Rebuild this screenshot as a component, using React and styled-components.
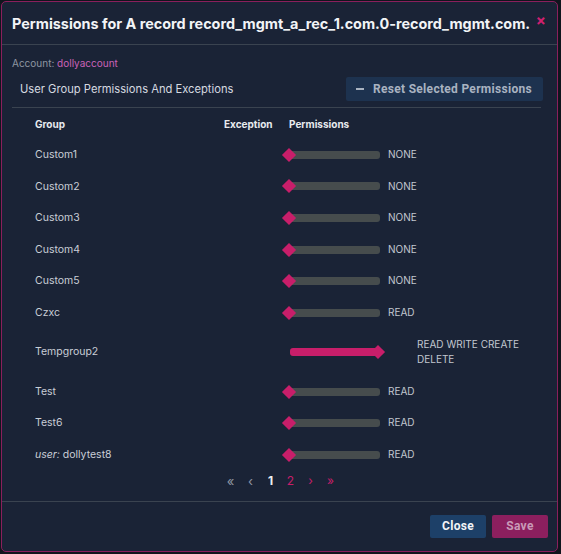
import React from "react";
import styled, { createGlobalStyle } from "styled-components";

const GlobalStyle = createGlobalStyle`
  html, body {
    margin: 0;
    background: #10151d;
    font-family: Inter, "Noto Sans", sans-serif;
  }
  * {
    box-sizing: border-box;
  }
`;

const rows = [
  { name: "Custom1", level: "NONE" },
  { name: "Custom2", level: "NONE" },
  { name: "Custom3", level: "NONE" },
  { name: "Custom4", level: "NONE" },
  { name: "Custom5", level: "NONE" },
  { name: "Czxc", level: "READ" },
  { name: "Tempgroup2", level: "READ WRITE CREATE DELETE", full: true },
  { name: "Test", level: "READ" },
  { name: "Test6", level: "READ" },
  { name: "dollytest8", level: "READ", user: true },
];

const App = () => {
  return (
    <>
      <GlobalStyle />
      <Backdrop>
        <Modal>
          <Header>
            <Title>
              Permissions for A record record_mgmt_a_rec_1.com.0-record_mgmt.com.
            </Title>
            <CloseX>×</CloseX>
          </Header>
          <Body>
            <Account>
              Account: <span>dollyaccount</span>
            </Account>
            <SectionBar>
              <SectionTitle>User Group Permissions And Exceptions</SectionTitle>
              <ResetButton>
                <Minus />
                Reset Selected Permissions
              </ResetButton>
            </SectionBar>
            <Table>
              <HeadRow>
                <HeadCell>Group</HeadCell>
                <HeadCell>Exception</HeadCell>
                <HeadCell>Permissions</HeadCell>
              </HeadRow>
              {rows.map((row) => (
                <Row key={row.name}>
                  <GroupName>
                    {row.user && <em>user:</em>} {row.name}
                  </GroupName>
                  <div />
                  <PermCell>
                    <Track full={row.full}>
                      <Thumb full={row.full} />
                    </Track>
                    <Level full={row.full}>{row.level}</Level>
                  </PermCell>
                </Row>
              ))}
            </Table>
            <Pager>
              <PageLink>«</PageLink>
              <PageLink>‹</PageLink>
              <PageLink current>1</PageLink>
              <PageLink active>2</PageLink>
              <PageLink active>›</PageLink>
              <PageLink active>»</PageLink>
            </Pager>
          </Body>
          <Footer>
            <Button>Close</Button>
            <Button save>Save</Button>
          </Footer>
        </Modal>
      </Backdrop>
    </>
  );
};

const Backdrop = styled.div`
  padding: 1px 3px 2px 1px;
`;

const Modal = styled.div`
  width: 557px;
  background: #1a2336;
  border: 1px solid #8a1f5c;
  border-radius: 5px;
  color: #c9ced6;
`;

const Header = styled.div`
  display: flex;
  align-items: center;
  justify-content: space-between;
  height: 43px;
  padding: 0 11px 0 10px;
  border-bottom: 1px solid #3a4350;
`;

const Title = styled.h2`
  margin: 0;
  font-size: 14.4px;
  font-weight: 700;
  color: #f2f4f7;
  white-space: nowrap;
`;

const CloseX = styled.span`
  align-self: flex-start;
  margin-top: 11px;
  color: #d0206f;
  font-size: 15px;
  font-weight: 700;
  line-height: 1;
`;

const Body = styled.div`
  padding: 11px 14px 0 10px;
`;

const Account = styled.div`
  font-size: 10px;
  line-height: 14px;
  color: #8e96a2;
  span {
    color: #c862b8;
  }
`;

const SectionBar = styled.div`
  display: flex;
  align-items: center;
  justify-content: space-between;
  margin-top: 7px;
  padding: 0 0 6px 8px;
  border-bottom: 1px solid #3a4350;
  margin-right: 2px;
`;

const SectionTitle = styled.div`
  font-size: 11.2px;
  color: #d6dae0;
`;

const ResetButton = styled.button`
  display: flex;
  align-items: center;
  gap: 9px;
  height: 24px;
  width: 197px;
  margin-right: -2px;
  padding: 0 0 0 10px;
  border: none;
  border-radius: 2px;
  background: #1d324f;
  color: #a9b3c1;
  font-family: Roboto, "Liberation Sans", sans-serif;
  font-size: 12px;
  font-weight: 700;
  letter-spacing: 0.3px;
`;

const Minus = styled.span`
  width: 8px;
  height: 2px;
  background: #a9b3c1;
`;

const Table = styled.div`
  display: flex;
  flex-direction: column;
`;

const HeadRow = styled.div`
  display: grid;
  grid-template-columns: 189px 65px 1fr;
  height: 31px;
  align-items: center;
  padding: 1px 0 0 23px;
`;

const HeadCell = styled.div`
  font-size: 10px;
  font-weight: 700;
  color: #e8ebef;
`;

const Row = styled.div`
  display: grid;
  grid-template-columns: 189px 65px 1fr;
  align-items: center;
  padding: 8px 0 8px 23px;
  min-height: 31.6px;
`;

const GroupName = styled.div`
  font-size: 10.5px;
  line-height: 15.6px;
  color: #c9ced6;
  em {
    font-style: italic;
  }
`;

const PermCell = styled.div`
  display: flex;
  align-items: center;
`;

const Track = styled.div`
  position: relative;
  width: 91px;
  height: 8px;
  margin-left: ${(p) => (p.full ? "1px" : "0")};
  border-radius: ${(p) => (p.full ? "3px 0 0 3px" : "3px")};
  background: ${(p) => (p.full ? "#c81e6a" : "#464c4d")};
`;

const Thumb = styled.span`
  position: absolute;
  top: -1px;
  left: ${(p) => (p.full ? "83px" : "-5px")};
  width: 10px;
  height: 10px;
  background: #c81e6a;
  transform: rotate(45deg);
`;

const Level = styled.div`
  margin-left: ${(p) => (p.full ? "36px" : "8px")};
  max-width: 112px;
  font-size: 10px;
  line-height: 15.6px;
  color: #c3c8d0;
`;

const Pager = styled.div`
  display: flex;
  justify-content: center;
  align-items: center;
  gap: 11px;
  height: 20px;
  margin-bottom: 10px;
  padding-left: 6px;
`;

const PageLink = styled.span`
  min-width: 9px;
  text-align: center;
  font-size: ${(p) => (p.current || p.active ? "12px" : "13px")};
  font-weight: ${(p) => (p.current ? 700 : 400)};
  color: ${(p) => (p.current ? "#eef0f3" : p.active ? "#c81e6a" : "#8e96a2")};
`;

const Footer = styled.div`
  display: flex;
  justify-content: flex-end;
  gap: 6px;
  padding: 13px 9px 13px 0;
  border-top: 1px solid #3a4350;
`;

const Button = styled.button`
  width: 56px;
  height: 23px;
  border: none;
  border-radius: 2px;
  background: ${(p) => (p.save ? "#8c1f5e" : "#1d4068")};
  color: ${(p) => (p.save ? "#c99ab8" : "#f2f4f7")};
  font-family: Roboto, "Liberation Sans", sans-serif;
  font-size: 12px;
  font-weight: 700;
  letter-spacing: 0.3px;
`;

export default App;
